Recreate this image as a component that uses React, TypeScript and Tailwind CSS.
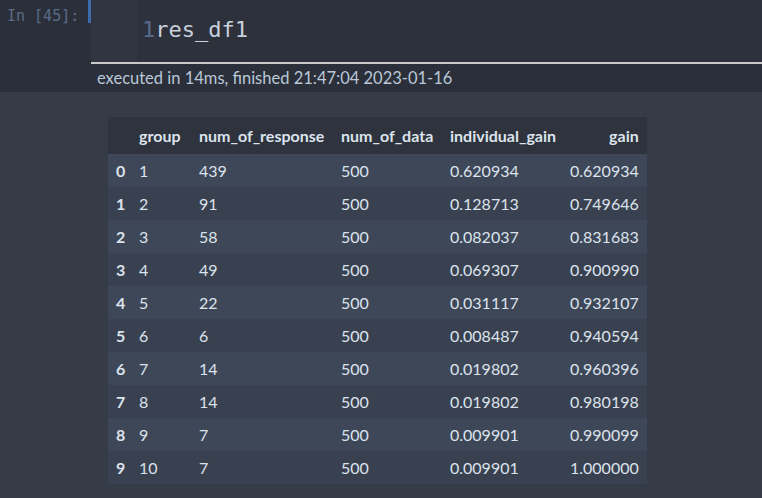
import React from "react";

const rows = [
  [1, 439, 500, "0.620934", "0.620934"],
  [2, 91, 500, "0.128713", "0.749646"],
  [3, 58, 500, "0.082037", "0.831683"],
  [4, 49, 500, "0.069307", "0.900990"],
  [5, 22, 500, "0.031117", "0.932107"],
  [6, 6, 500, "0.008487", "0.940594"],
  [7, 14, 500, "0.019802", "0.960396"],
  [8, 14, 500, "0.019802", "0.980198"],
  [9, 7, 500, "0.009901", "0.990099"],
  [10, 7, 500, "0.009901", "1.000000"],
];

const mono = { fontFamily: "'DejaVu Sans Mono', 'Liberation Mono', monospace" };
const sans = { fontFamily: "Lato, 'Noto Sans', sans-serif" };

export default function App() {
  return (
    <div className="w-[762px] h-[498px] overflow-hidden bg-[#2b2f3a] flex flex-col">
      {/* input cell */}
      <div className="flex h-[64px]">
        <div className="w-[88px] pl-[7px] pt-[5px] text-[15px] text-[#5b6c88]" style={mono}>
          In [45]:
        </div>
        <div className="w-[3px] flex flex-col">
          <div className="h-[23px] bg-[#3d6bb0]" />
        </div>
        <div className="flex-1 flex border-b-[2px] border-[#c9c9c9] bg-[#2d313c]">
          <div className="w-[46px] bg-[#313541]" />
          <div className="pl-[5px] pt-[15px] text-[22px] leading-[30px]" style={mono}>
            <span className="text-[#5a6c8c]">1</span>
            <span className="text-[#c8d0dc]">res_df1</span>
          </div>
        </div>
      </div>
      <div className="h-[28px] pl-[97px] pt-[3px] text-[16.5px] leading-[22px] text-[#bac8d8]" style={sans}>
        executed in 14ms, finished 21:47:04 2023-01-16
      </div>
      {/* output */}
      <div className="flex-1 bg-[#353b47] pl-[108px] pt-[25px]">
        <table className="border-collapse text-[16px] text-[#dce3ec]" style={sans}>
          <thead>
            <tr className="bg-[#2e333e] h-[37px] font-bold">
              <th className="w-[24px]" />
              <th className="w-[59px] pl-[7px] text-left">group</th>
              <th className="w-[142px] pl-[8px] text-left">num_of_response</th>
              <th className="w-[109px] pl-[8px] text-left">num_of_data</th>
              <th className="w-[128px] pl-[8px] text-left">individual_gain</th>
              <th className="w-[76px] pr-[8px] text-right">gain</th>
            </tr>
          </thead>
          <tbody>
            {rows.map((r, i) => (
              <tr key={i} className={`h-[33px] ${i % 2 === 0 ? "bg-[#3e4758]" : "bg-[#394150]"}`}>
                <td className="pl-[8px] font-bold">{i}</td>
                <td className="pl-[7px]">{r[0]}</td>
                <td className="pl-[8px]">{r[1]}</td>
                <td className="pl-[8px]">{r[2]}</td>
                <td className="pl-[8px]">{r[3]}</td>
                <td className="pr-[8px] text-right">{r[4]}</td>
              </tr>
            ))}
          </tbody>
        </table>
      </div>
    </div>
  );
}
